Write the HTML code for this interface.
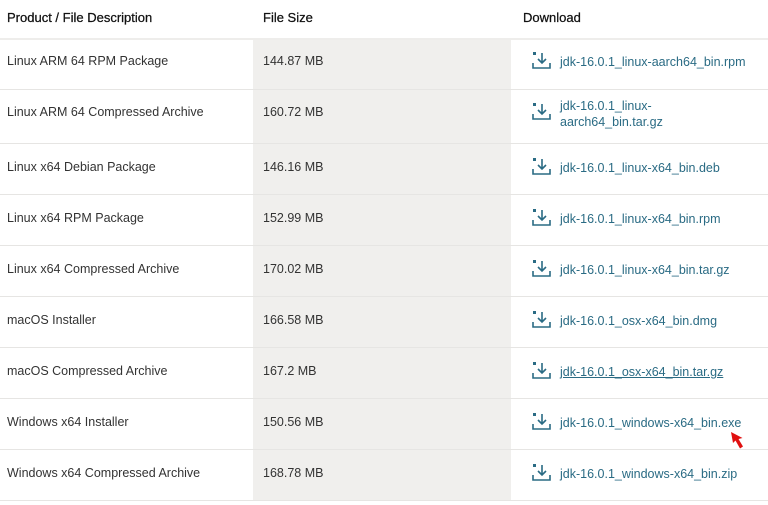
<!DOCTYPE html>
<html><head><style>
body{margin:0;width:768px;height:505px;background:#fff;font-family:"Liberation Sans",sans-serif;overflow:hidden;position:relative}
.col{position:absolute;top:39px;left:253px;width:258px;height:462px;background:#f0efed}
.hdr{position:absolute;top:1px;height:38px;font-size:13px;color:#111;line-height:34px;-webkit-text-stroke:0.25px #111}
.line{position:absolute;left:0;width:768px;height:1px;background:#e6e5e3}
.row{position:absolute;left:0;width:768px;font-size:12.5px;color:#333}
.row .d{position:absolute;left:7px}
.row .s{position:absolute;left:263px}
.row .l{position:absolute;left:560px;color:#2a6b84;line-height:16px}
.row svg{position:absolute;left:531px;top:-3px}
</style></head><body>
<div class="col"></div>
<div class="hdr" style="left:7px">Product / File Description</div>
<div class="hdr" style="left:263px">File Size</div>
<div class="hdr" style="left:523px">Download</div>
<div class="line" style="top:38px;height:2px;background:#eeedeb"></div>
<div class="line" style="top:89px"></div>
<div class="line" style="top:143px"></div>
<div class="line" style="top:194px"></div>
<div class="line" style="top:245px"></div>
<div class="line" style="top:296px"></div>
<div class="line" style="top:347px"></div>
<div class="line" style="top:398px"></div>
<div class="line" style="top:449px"></div>
<div class="line" style="top:500px"></div>

<div class="row" style="top:54px"><span class="d">Linux ARM 64 RPM Package</span><span class="s">144.87 MB</span><svg width="20" height="19" viewBox="0 0 20 19"><rect x="2" y="1" width="3" height="3" fill="#2a6b84"/><path d="M11 2v10M7 8l4 4 4-4M2 12v5h17v-5" fill="none" stroke="#2a6b84" stroke-width="1.6"/></svg><span class="l">jdk-16.0.1_linux-aarch64_bin.rpm</span></div>
<div class="row" style="top:105px"><span class="d">Linux ARM 64 Compressed Archive</span><span class="s">160.72 MB</span><svg width="20" height="19" viewBox="0 0 20 19"><rect x="2" y="1" width="3" height="3" fill="#2a6b84"/><path d="M11 2v10M7 8l4 4 4-4M2 12v5h17v-5" fill="none" stroke="#2a6b84" stroke-width="1.6"/></svg><span class="l" style="top:-7px">jdk-16.0.1_linux-<br>aarch64_bin.tar.gz</span></div>
<div class="row" style="top:160px"><span class="d">Linux x64 Debian Package</span><span class="s">146.16 MB</span><svg width="20" height="19" viewBox="0 0 20 19"><rect x="2" y="1" width="3" height="3" fill="#2a6b84"/><path d="M11 2v10M7 8l4 4 4-4M2 12v5h17v-5" fill="none" stroke="#2a6b84" stroke-width="1.6"/></svg><span class="l">jdk-16.0.1_linux-x64_bin.deb</span></div>
<div class="row" style="top:211px"><span class="d">Linux x64 RPM Package</span><span class="s">152.99 MB</span><svg width="20" height="19" viewBox="0 0 20 19"><rect x="2" y="1" width="3" height="3" fill="#2a6b84"/><path d="M11 2v10M7 8l4 4 4-4M2 12v5h17v-5" fill="none" stroke="#2a6b84" stroke-width="1.6"/></svg><span class="l">jdk-16.0.1_linux-x64_bin.rpm</span></div>
<div class="row" style="top:262px"><span class="d">Linux x64 Compressed Archive</span><span class="s">170.02 MB</span><svg width="20" height="19" viewBox="0 0 20 19"><rect x="2" y="1" width="3" height="3" fill="#2a6b84"/><path d="M11 2v10M7 8l4 4 4-4M2 12v5h17v-5" fill="none" stroke="#2a6b84" stroke-width="1.6"/></svg><span class="l">jdk-16.0.1_linux-x64_bin.tar.gz</span></div>
<div class="row" style="top:313px"><span class="d">macOS Installer</span><span class="s">166.58 MB</span><svg width="20" height="19" viewBox="0 0 20 19"><rect x="2" y="1" width="3" height="3" fill="#2a6b84"/><path d="M11 2v10M7 8l4 4 4-4M2 12v5h17v-5" fill="none" stroke="#2a6b84" stroke-width="1.6"/></svg><span class="l">jdk-16.0.1_osx-x64_bin.dmg</span></div>
<div class="row" style="top:364px"><span class="d">macOS Compressed Archive</span><span class="s">167.2 MB</span><svg width="20" height="19" viewBox="0 0 20 19"><rect x="2" y="1" width="3" height="3" fill="#2a6b84"/><path d="M11 2v10M7 8l4 4 4-4M2 12v5h17v-5" fill="none" stroke="#2a6b84" stroke-width="1.6"/></svg><span class="l" style="text-decoration:underline">jdk-16.0.1_osx-x64_bin.tar.gz</span></div>
<div class="row" style="top:415px"><span class="d">Windows x64 Installer</span><span class="s">150.56 MB</span><svg width="20" height="19" viewBox="0 0 20 19"><rect x="2" y="1" width="3" height="3" fill="#2a6b84"/><path d="M11 2v10M7 8l4 4 4-4M2 12v5h17v-5" fill="none" stroke="#2a6b84" stroke-width="1.6"/></svg><span class="l">jdk-16.0.1_windows-x64_bin.exe</span></div>
<div class="row" style="top:466px"><span class="d">Windows x64 Compressed Archive</span><span class="s">168.78 MB</span><svg width="20" height="19" viewBox="0 0 20 19"><rect x="2" y="1" width="3" height="3" fill="#2a6b84"/><path d="M11 2v10M7 8l4 4 4-4M2 12v5h17v-5" fill="none" stroke="#2a6b84" stroke-width="1.6"/></svg><span class="l">jdk-16.0.1_windows-x64_bin.zip</span></div>
<svg style="position:absolute;left:730px;top:431px" width="16" height="22" viewBox="0 0 16 22"><path d="M1 1L3 12l2.5-2.5 4.5 8 3-2-4.5-7.5 4-1z" fill="#e01010"/></svg>
</body></html>
